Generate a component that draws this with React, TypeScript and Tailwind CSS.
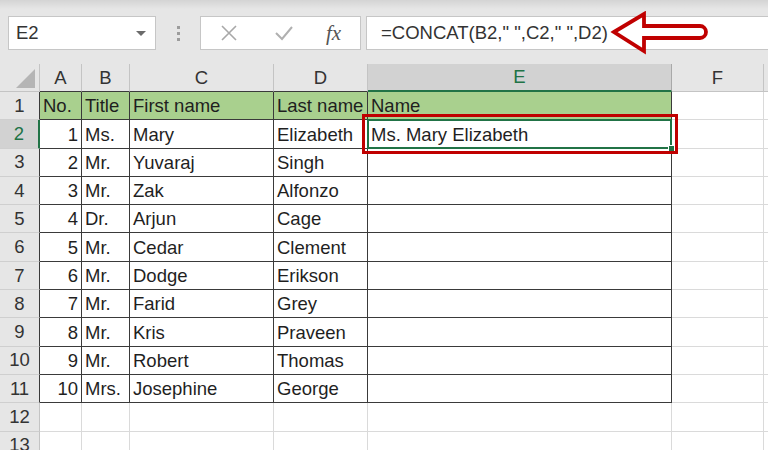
import React from 'react';

const cols = [
    { key: 'A', label: 'A', w: 'w-[42px]' },
    { key: 'B', label: 'B', w: 'w-[48px]' },
    { key: 'C', label: 'C', w: 'w-[144px]' },
    { key: 'D', label: 'D', w: 'w-[94px]' },
    { key: 'E', label: 'E', w: 'w-[304px]' },
    { key: 'F', label: 'F', w: 'w-[92px]' },
    // G sits past the right edge, only its border shows
    { key: 'G', label: '', w: 'w-[100px]' },
];

const data: (string | number)[][] = [
    ['No.', 'Title', 'First name', 'Last name', 'Name'],
    [1, 'Ms.', 'Mary', 'Elizabeth', 'Ms. Mary Elizabeth'],
    [2, 'Mr.', 'Yuvaraj', 'Singh', ''],
    [3, 'Mr.', 'Zak', 'Alfonzo', ''],
    [4, 'Dr.', 'Arjun', 'Cage', ''],
    [5, 'Mr.', 'Cedar', 'Clement', ''],
    [6, 'Mr.', 'Dodge', 'Erikson', ''],
    [7, 'Mr.', 'Farid', 'Grey', ''],
    [8, 'Mr.', 'Kris', 'Praveen', ''],
    [9, 'Mr.', 'Robert', 'Thomas', ''],
    [10, 'Mrs.', 'Josephine', 'George', ''],
    ['', '', '', '', ''],
    ['', '', '', '', ''],
];

function Toolbar() {
    return (
        <div className="h-[64px] bg-[#e6e6e6] relative">
            <div className="h-[9px] bg-gradient-to-b from-[#d4d4d4] to-[#e6e6e6]" />
            <div className="flex items-center pt-[7px] h-[41px]">
                {/* name box */}
                <div className="ml-[8px] shrink-0 w-[148px] h-[34px] bg-white border border-[#c6c6c6] flex items-center pl-[7px] pr-[9px]">
                    <span className="text-[18.5px] text-[#333]">E2</span>
                    <div className="ml-auto w-0 h-0 border-l-[5px] border-r-[5px] border-t-[5px] border-l-transparent border-r-transparent border-t-[#6b6b6b]" />
                </div>
                {/* grip */}
                <div className="w-[44px] shrink-0 flex flex-col items-center gap-[3px]">
                    <div className="w-[3px] h-[3px] bg-[#9c9c9c]" />
                    <div className="w-[3px] h-[3px] bg-[#9c9c9c]" />
                    <div className="w-[3px] h-[3px] bg-[#9c9c9c]" />
                </div>
                {/* cancel / enter / fx */}
                <div className="w-[161px] shrink-0 h-[34px] bg-white border border-[#c6c6c6] flex items-center">
                    <svg className="ml-[19px]" width="18" height="18" viewBox="0 0 18 18">
                        <path d="M2 2 L16 16 M16 2 L2 16" stroke="#a8a8a8" strokeWidth="1.6" fill="none" />
                    </svg>
                    <svg className="ml-[36px]" width="20" height="16" viewBox="0 0 20 16">
                        <path d="M2 8 L8 14 L18 2" stroke="#b0b0b0" strokeWidth="2" fill="none" />
                    </svg>
                    <span className="ml-[32px] text-[21px] italic text-[#555] leading-none" style={{ fontFamily: '"Liberation Serif", serif' }}>fx</span>
                </div>
                {/* formula bar */}
                <div className="ml-[5px] flex-1 h-[34px] bg-white border border-[#c6c6c6] border-r-0 flex items-center pl-[14px] relative">
                    <span className="text-[18.5px] text-[#333] whitespace-pre">=CONCAT(B2," ",C2," ",D2)</span>
                    <svg className="absolute left-[241px] top-[-6px]" width="100" height="44" viewBox="0 0 100 44">
                        <path d="M6 21 L36 3 L36 15 L92 15 A6 6 0 0 1 92 27 L36 27 L36 40 Z" fill="white" stroke="#c00000" strokeWidth="3.8" strokeLinejoin="miter" />
                    </svg>
                </div>
            </div>
        </div>
    );
}

function ColumnHeaders() {
    return (
        <div className="flex h-[28px]">
            <div className="w-[40px] shrink-0 bg-[#e6e6e6] border-r border-b border-[#c4c4c4] relative">
                <svg className="absolute right-[4px] bottom-[3px]" width="19" height="19" viewBox="0 0 19 19">
                    <path d="M19 0 L19 19 L0 19 Z" fill="#b5b5b5" />
                </svg>
            </div>
            {cols.map((c, i) => {
                const sel = c.key === 'E';
                const tableCol = i < 5;
                return (
                    <div
                        key={c.key}
                        className={`${c.w} shrink-0 flex items-center justify-center text-[18.5px] border-r ${sel ? 'bg-[#d2d2d2] text-[#217346] border-b-2 border-b-[#217346] border-r-[#a9a9a9]' : 'bg-[#e6e6e6] text-[#333] border-r-[#c4c4c4] border-b'} ${!sel && tableCol ? 'border-b-[#3a3a3a]' : ''} ${!sel && !tableCol ? 'border-b-[#c4c4c4]' : ''}`}
                    >
                        {c.label}
                    </div>
                );
            })}
        </div>
    );
}

function Row({ r }: { r: number }) {
    const values = data[r];
    const inTable = r <= 10;
    const isHeader = r === 0;
    const sel = r === 1;
    return (
        <div className="flex h-[28.3px]">
            <div
                className={`w-[40px] shrink-0 flex items-center justify-center text-[18.5px] border-b border-b-[#cfcfcf] ${sel ? 'bg-[#d2d2d2] text-[#217346] border-r-2 border-r-[#217346]' : 'bg-[#e6e6e6] text-[#333] border-r'} ${!sel && inTable ? 'border-r-[#3a3a3a]' : ''} ${!sel && !inTable ? 'border-r-[#c4c4c4]' : ''}`}
            >
                {r + 1}
            </div>
            {cols.map((c, i) => {
                const tableCell = inTable && i < 5;
                const v = i < 5 ? values[i] : '';
                const numeric = typeof v === 'number';
                const isSel = sel && c.key === 'E';
                return (
                    <div
                        key={c.key}
                        className={`${c.w} shrink-0 relative flex items-end pb-[2px] px-[3px] text-[18.5px] text-[#1f1f1f] whitespace-nowrap border-r border-b ${numeric ? 'justify-end' : 'justify-start'} ${tableCell ? 'border-[#3a3a3a]' : 'border-[#dadada]'} ${isHeader && tableCell ? 'bg-[#a9d08e]' : 'bg-white'} ${r === 11 && i < 5 ? 'border-r-[#dadada]' : ''} ${inTable && i === 5 ? 'border-b-[#dadada]' : ''}`}
                    >
                        <span className="leading-[22px]">{v}</span>
                        {isSel && (
                            <>
                                <div className="absolute z-10 inset-[-1px] border-2 border-[#217346]" />
                                <div className="absolute z-10 right-[-4px] bottom-[-4px] w-[7px] h-[7px] bg-[#217346] border border-white" />
                                <div className="absolute z-20 left-[-6px] top-[-6px] right-[-7px] bottom-[-6px] border-[3px] border-[#c00000]" />
                            </>
                        )}
                    </div>
                );
            })}
        </div>
    );
}

export default function App() {
    return (
        <div className="w-[768px] h-[450px] overflow-hidden bg-white" style={{ fontFamily: '"Liberation Sans", Arial, sans-serif' }}>
            <Toolbar />
            <ColumnHeaders />
            {data.map((_, r) => (
                <Row key={r} r={r} />
            ))}
        </div>
    );
}
